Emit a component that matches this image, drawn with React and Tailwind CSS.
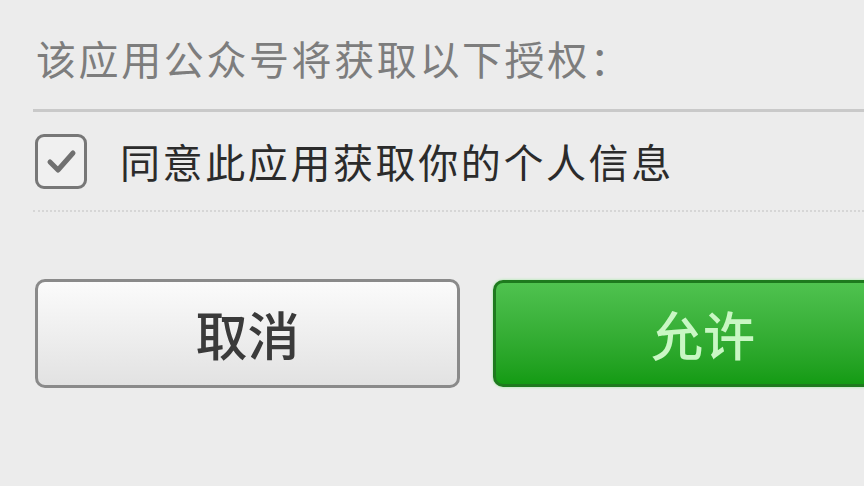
export default function App() {
  const font = { fontFamily: '"Noto Sans CJK SC", "Noto Sans", sans-serif' };
  return (
    <div className="w-[864px] h-[486px] overflow-hidden bg-[#ececec] pl-[33px]" style={font}>
      <div className="h-[112px] flex items-center border-b-[3px] border-[#c9c9c9] pl-[3px]">
        <span className="text-[40px] leading-none text-[#7d7d7d] tracking-[2.6px] pt-[6px]">该应用公众号将获取以下授权：</span>
      </div>
      <div className="h-[100px] flex items-center gap-[33px] border-b-2 border-dotted border-[#d6d6d6] pl-[2px]">
        <div className="w-[52px] h-[55px] shrink-0 rounded-[9px] border-[3px] border-[#777777] bg-[#f0f0f0] flex items-center justify-center">
          <svg width="32" height="32" viewBox="0 0 32 32" fill="none">
            <path d="M5 17 L13 25 L28 8" stroke="#707070" strokeWidth="5" strokeLinecap="round" strokeLinejoin="round" />
          </svg>
        </div>
        <span className="text-[40px] leading-none text-[#2b2b2b] tracking-[2.6px]">同意此应用获取你的个人信息</span>
      </div>
      <div className="mt-[67px] flex gap-[33px] pl-[2px]">
        <button className="w-[425px] h-[109px] shrink-0 rounded-[10px] border-[3px] border-[#8a8a8a] bg-gradient-to-b from-[#fbfbfb] to-[#e2e2e2] flex items-center justify-center">
          <span className="text-[52px] leading-none font-medium text-[#3a3a3a]">取消</span>
        </button>
        <button className="w-[420px] h-[107px] shrink-0 mt-[1px] rounded-[10px] border-[3px] border-[#1e7a1e] bg-gradient-to-b from-[#4fc24f] to-[#139b13] flex items-center justify-center shadow-[0_0_3px_#9be89b]">
          <span className="text-[52px] leading-none font-medium text-[#c9f7c4]">允许</span>
        </button>
      </div>
    </div>
  );
}
